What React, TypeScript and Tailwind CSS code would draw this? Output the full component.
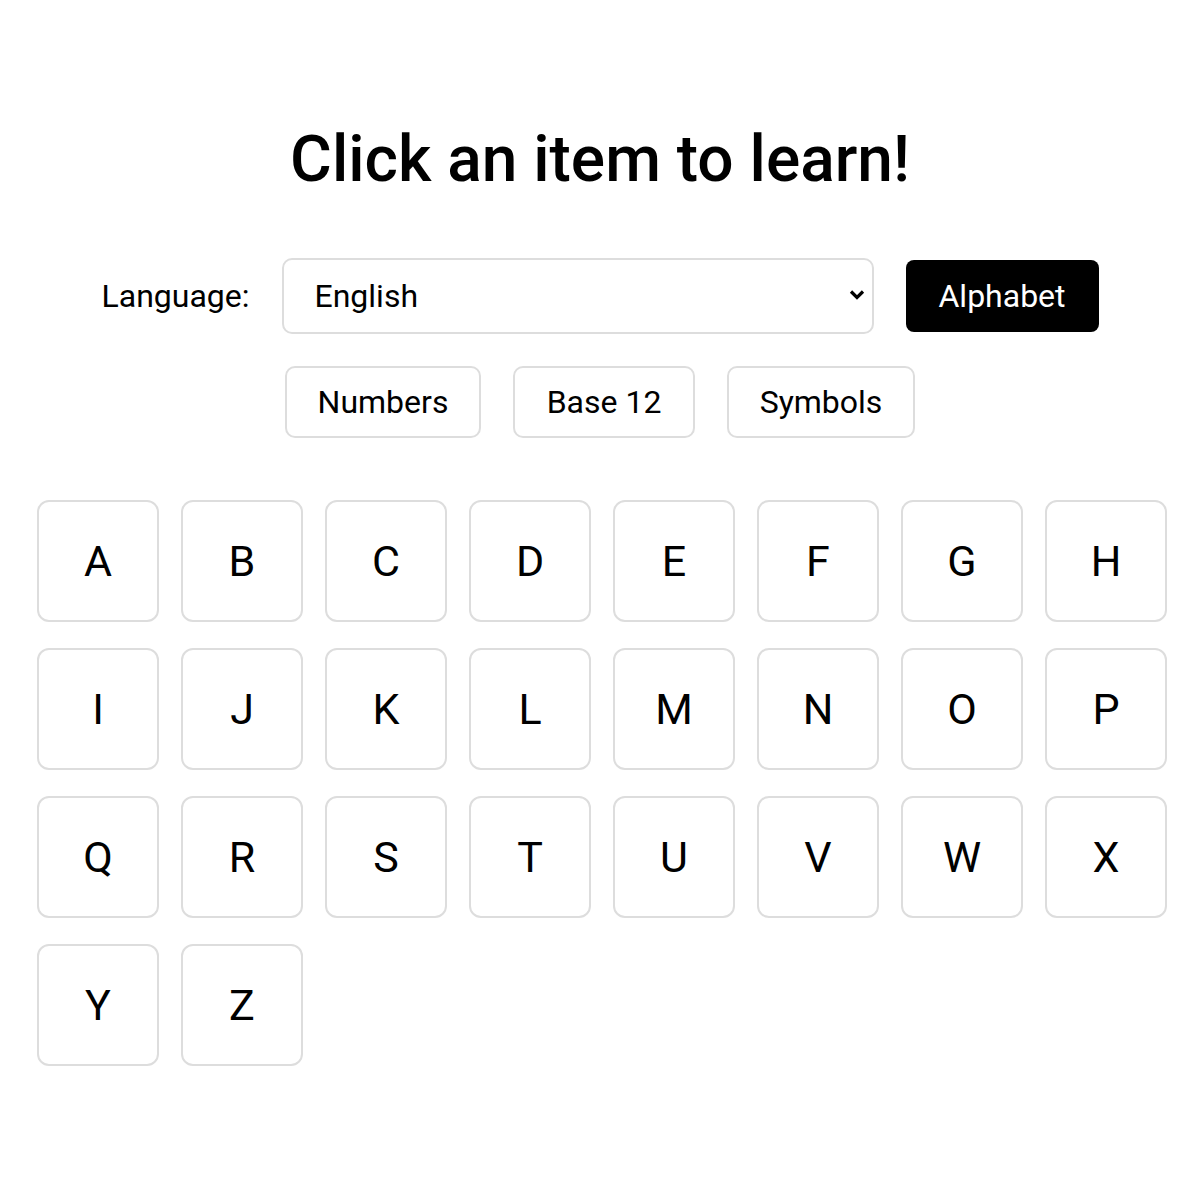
import React from "react";

const letters = "ABCDEFGHIJKLMNOPQRSTUVWXYZ".split("");

export default function App() {
  return (
    <div className="min-h-[1200px] bg-white text-black" style={{ fontFamily: "Roboto, 'Noto Sans', sans-serif" }}>
      <div className="pt-[118px]">
        <h1 className="text-center text-[64px] font-medium leading-[84px]">Click an item to learn!</h1>
      </div>
      <div className="mt-[56px] flex flex-wrap items-center justify-center gap-[32px] px-[20px]">
        <label className="text-[32px] leading-[38px]">Language:</label>
        <div className="relative">
          <select
            defaultValue="English"
            className="h-[76px] w-[592px] appearance-none rounded-[10px] border-2 border-[#dddddd] bg-white pl-[31px] text-[32px] outline-none"
            style={{ fontFamily: "Roboto, sans-serif" }}
          >
            <option>English</option>
          </select>
          <svg
            className="pointer-events-none absolute right-[9px] top-[31px]"
            width="16"
            height="12"
            viewBox="0 0 16 12"
          >
            <path d="M2 2.5 L8 8.5 L14 2.5" fill="none" stroke="#000" strokeWidth="3.2" />
          </svg>
        </div>
        <button className="h-[72px] w-[193px] rounded-[8px] bg-black text-[32px] text-white">Alphabet</button>
        <button className="h-[72px] w-[196px] rounded-[10px] border-2 border-[#dddddd] bg-white text-[32px]">Numbers</button>
        <button className="h-[72px] w-[182px] rounded-[10px] border-2 border-[#dddddd] bg-white text-[32px]">Base 12</button>
        <button className="h-[72px] w-[188px] rounded-[10px] border-2 border-[#dddddd] bg-white text-[32px]">Symbols</button>
      </div>
      <div className="mt-[62px] grid grid-cols-[repeat(8,122px)] gap-x-[22px] gap-y-[26px] pl-[37px]">
        {letters.map((l) => (
          <button
            key={l}
            className="flex h-[122px] w-[122px] items-center justify-center rounded-[12px] border-2 border-[#dddddd] bg-white text-[43px] leading-[50px]"
          >
            {l}
          </button>
        ))}
      </div>
    </div>
  );
}
